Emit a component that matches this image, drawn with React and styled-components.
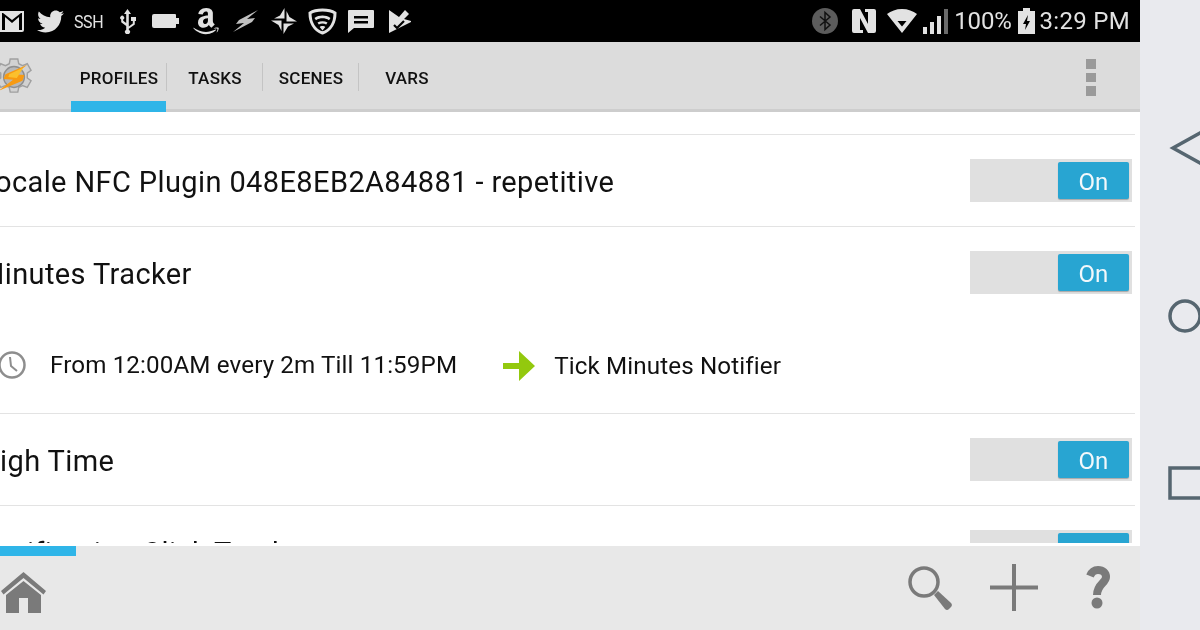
import React from "react";
import styled, { createGlobalStyle } from "styled-components";
import { FaTwitter, FaAmazon } from "react-icons/fa";

const GlobalStyle = createGlobalStyle`
  html, body {
    margin: 0;
    padding: 0;
    background: #e9eaee;
  }
  body {
    font-family: Roboto, "Liberation Sans", sans-serif;
    overflow: hidden;
  }
`;

const Screen = styled.div`
  width: 1200px;
  height: 630px;
  display: flex;
  overflow: hidden;
  filter: blur(0.35px);
`;

const Phone = styled.div`
  width: 1140px;
  height: 630px;
  display: flex;
  flex-direction: column;
  background: #fff;
  overflow: hidden;
`;

const StatusBar = styled.div`
  height: 42px;
  flex: none;
  background: #000;
  color: #e2e2e2;
  display: flex;
  align-items: center;
  justify-content: space-between;
  padding-right: 10px;
`;

const StatusGroup = styled.div`
  display: flex;
  align-items: center;
`;

const Glyph = styled.svg`
  flex: none;
  display: block;
  margin-left: ${p => p.$gap || 0}px;
  fill: #e2e2e2;
`;

const TwitterIcon = styled(FaTwitter)`
  flex: none;
  margin-left: 13px;
  color: #e2e2e2;
  font-size: 27px;
`;

const AmazonIcon = styled(FaAmazon)`
  flex: none;
  margin-left: 12px;
  color: #e2e2e2;
  font-size: 30px;
`;

const SshLabel = styled.span`
  margin-left: 10px;
  font-size: 16px;
  width: 30px;
  letter-spacing: -0.4px;
  transform: scaleY(1.1);
`;

const StatusText = styled.span`
  font-size: 24px;
  letter-spacing: ${p => p.$spacing || 0}px;
  margin-left: ${p => p.$gap || 0}px;
  white-space: nowrap;
`;

const ActionBar = styled.div`
  height: 70px;
  flex: none;
  box-sizing: border-box;
  background: #dcdcdc;
  border-bottom: 3px solid #cdcdcd;
  display: flex;
  position: relative;
`;

const AppLogo = styled.svg`
  flex: none;
  margin: 16px 0 0 -4px;
  width: 36px;
  height: 38px;
`;

const TabStrip = styled.div`
  display: flex;
  margin-left: 39px;
  height: 70px;
`;

const Tab = styled.div`
  width: 96px;
  height: 70px;
  box-sizing: border-box;
  display: flex;
  align-items: center;
  justify-content: center;
  padding-top: 2px;
  position: relative;
  font-size: 17px;
  font-weight: 500;
  color: #111;
  letter-spacing: 0.25px;

  &::after {
    content: "";
    position: absolute;
    right: 0;
    top: 21px;
    height: 28px;
    width: 1px;
    background: ${p => (p.$last ? "transparent" : "#c4c4c4")};
  }

  &::before {
    content: "";
    position: absolute;
    left: 0;
    right: 1px;
    bottom: 0;
    height: 11px;
    background: ${p => (p.$active ? "#2fb5e8" : "transparent")};
  }
`;

const Overflow = styled.div`
  margin-left: auto;
  margin-right: 44px;
  padding-top: 17px;
  display: flex;
  flex-direction: column;
  gap: 4px;
`;

const OverflowDot = styled.div`
  width: 10px;
  height: 9.5px;
  background: #9a9a9a;
`;

const List = styled.div`
  flex: 1;
  min-height: 0;
  margin-bottom: 3px;
  overflow: hidden;
  padding-top: 22px;
`;

const Row = styled.div`
  margin-right: 5px;
  border-top: 1px solid #e3e3e3;
`;

const RowHead = styled.div`
  height: 91px;
  display: flex;
  align-items: center;
  justify-content: space-between;
  padding-right: 3px;
`;

const RowTitle = styled.div`
  margin-left: -21px;
  padding-top: 2px;
  font-size: 29px;
  color: #111;
  letter-spacing: 0.39px;
  white-space: nowrap;
`;

const Toggle = styled.div`
  width: 162px;
  height: 43px;
  box-sizing: border-box;
  background: #e0e0e0;
  padding: 3px;
  display: flex;
  justify-content: flex-end;
`;

const ToggleKnob = styled.div`
  width: 71px;
  height: 37px;
  box-sizing: border-box;
  padding-top: 2px;
  background: #28a5d2;
  border-radius: 2px;
  box-shadow: 0 1px 1px rgba(0, 0, 0, 0.25);
  color: #f2f8fb;
  font-size: 24px;
  display: flex;
  align-items: center;
  justify-content: center;
`;

const RowDetail = styled.div`
  height: 95px;
  display: flex;
  align-items: flex-start;
  padding-top: 33px;
  box-sizing: border-box;
  font-size: 24.2px;
  color: #111;
`;

const ClockIcon = styled.svg`
  flex: none;
  margin-left: -2px;
  width: 28px;
  height: 28px;
`;

const DetailText = styled.span`
  margin-left: ${p => p.$gap}px;
  margin-top: ${p => p.$top || 0}px;
  white-space: nowrap;
  letter-spacing: 0.12px;
`;

const ArrowIcon = styled.svg`
  flex: none;
  margin-left: 46px;
  width: 32px;
  height: 30px;
`;

const Footer = styled.div`
  height: 84px;
  flex: none;
  background: #e8e8e8;
  position: relative;
  display: flex;
  align-items: flex-start;
`;

const ScrollMark = styled.div`
  position: absolute;
  left: 0;
  top: 0;
  width: 76px;
  height: 10px;
  background: #2fb5e8;
`;

const FooterIcon = styled.svg`
  flex: none;
  display: block;
  margin-left: ${p => p.$gap}px;
  margin-top: ${p => p.$top}px;
  fill: #7a7a7a;
`;

const NavBar = styled.div`
  width: 60px;
  height: 630px;
  flex: none;
  background: #e9eaee;
  padding-top: 130px;
  box-sizing: border-box;
  display: flex;
  flex-direction: column;
  gap: 132px;
  overflow: hidden;
`;

const NavIcon = styled.svg`
  display: block;
  flex: none;
  width: 60px;
  height: 36px;
  fill: none;
  stroke: #566670;
  stroke-width: 3.5;
`;

const rows = [
  { title: "Locale NFC Plugin 048E8EB2A84881 - repetitive" },
  { title: "Minutes Tracker", detail: true },
  { title: "High Time" },
  { title: "Notification Click Tracker" },
];

function OnToggle() {
  return (
    <Toggle>
      <ToggleKnob>On</ToggleKnob>
    </Toggle>
  );
}

function LeftStatus() {
  return (
    <StatusGroup>
      <Glyph width="24" height="21" viewBox="0 0 24 21">
        <path d="M2 0h22v19a2 2 0 0 1-2 2H0V0zM2 2v17h3V6l7 6 7-6v13h3V2h-1l-9 7-9-7z" />
      </Glyph>
      <TwitterIcon />
      <SshLabel>SSH</SshLabel>
      <Glyph $gap={14} width="19" height="25" viewBox="0 0 19 25">
        <path d="M9.500 0 13 5h-2.200v12.500l4-3V12H13V8h5v4h-1.200v3.500l-6 4.300v1a2.500 2.500 0 1 1-2.600 0v-3.800l-5-3.700V10.500a2 2 0 1 1 2 0v1.300l3 2.200V5H6z" />
      </Glyph>
      <Glyph $gap={15} width="27" height="14" viewBox="0 0 27 14">
        <path d="M2 0h21a1 1 0 0 1 1 1v3h3v6h-3v3a1 1 0 0 1-1 1H2a2 2 0 0 1-2-2V2a2 2 0 0 1 2-2z" />
      </Glyph>
      <AmazonIcon />
      <Glyph $gap={12} width="25" height="22" viewBox="0 0 25 22" style={{ opacity: 0.85 }}>
        <path d="M25 0 6 10l-3 4 8-1L0 22l19-10 3-4-8 1z" />
      </Glyph>
      <Glyph $gap={13} width="26" height="26" viewBox="0 0 26 26">
        {[0, 90, 180, 270].map(angle => (
          <path key={angle} d="M13.500 0v10.500H3l6-3z" transform={`rotate(${angle} 13 13)`} />
        ))}
      </Glyph>
      <Glyph $gap={11} width="29" height="27" viewBox="0 0 29 27">
        <path
          d="M14.500 2C9 2 5 3 2 5c0 9 4 17 12.500 20C23 22 27 14 27 5c-3-2-7-3-12.500-3z"
          fill="none"
          stroke="#e2e2e2"
          strokeWidth="3"
        />
        <path d="M6.500 10c5-3.200 11-3.200 16 0l-1.500 2.200c-4-2.500-9-2.500-13 0zM9.500 14.500c3-1.700 7-1.700 10 0l-1.300 2c-2.300-1.200-5.100-1.200-7.400 0zM14.500 18c1.200 0 2.200.4 2.800 1l-2.800 3.500-2.800-3.500c.6-.6 1.600-1 2.800-1z" />
      </Glyph>
      <Glyph $gap={11} width="26" height="23" viewBox="0 0 26 23">
        <path d="M1 0h24a1 1 0 0 1 1 1v16a1 1 0 0 1-1 1H6l-6 5V1a1 1 0 0 1 1-1zM6 6v2.500h14V6zM6 11v2.500h14V11z" fillRule="evenodd" />
      </Glyph>
      <Glyph $gap={15} width="22" height="23" viewBox="0 0 22 23">
        <path d="M0 0l10 7 6-7 4 4-5 5 7 2v1L0 23z" />
        <path d="M5 15l3 3 7-7" fill="none" stroke="#000" strokeWidth="2.200" />
      </Glyph>
    </StatusGroup>
  );
}

function RightStatus() {
  return (
    <StatusGroup>
      <Glyph width="26" height="26" viewBox="0 0 26 26">
        <circle cx="13" cy="13" r="13" fill="#5c5c5c" />
        <path d="M8 8.500 18 17l-5 4.500V4.500L18 9 8 17.500" fill="none" stroke="#111" strokeWidth="1.500" />
      </Glyph>
      <Glyph $gap={14} width="24" height="24" viewBox="0 0 24 24">
        <path d="M2 0h6l8 15V3h-3V0h9a2 2 0 0 1 2 2v20a2 2 0 0 1-2 2h-6L8 9v12h3v3H2a2 2 0 0 1-2-2V2a2 2 0 0 1 2-2z" />
      </Glyph>
      <Glyph $gap={11} width="30" height="24" viewBox="0 0 30 24">
        <path d="M15 0c6 0 11 2 15 5L15 24 0 5c4-3 9-5 15-5zM10.500 12l4.500 5.500 4.500-5.500z" fillRule="evenodd" />
      </Glyph>
      <Glyph $gap={6} width="25" height="25" viewBox="0 0 25 25">
        <path d="M0 18h4v7H0zM7 13h4v12H7zM14 7h4v18h-4z" />
        <path d="M21 0h4v25h-4z" fill="#6a6a6a" />
      </Glyph>
      <StatusText $gap={6} $spacing={-0.2}>100%</StatusText>
      <Glyph $gap={6} width="17" height="26" viewBox="0 0 17 26">
        <path d="M5 0h7v3h5v23H0V3h5zM10 7l-5 9h3l-1 6 5-9H9z" fillRule="evenodd" />
      </Glyph>
      <StatusText $gap={5} $spacing={0.3}>3:29 PM</StatusText>
    </StatusGroup>
  );
}

export default function App() {
  return (
    <>
      <GlobalStyle />
      <Screen>
        <Phone>
          <StatusBar>
            <LeftStatus />
            <RightStatus />
          </StatusBar>
          <ActionBar>
            <AppLogo viewBox="0 0 38 40">
              <path
                d="M15 1h8l1 5 4 2 5-2 4 7-4 3v5l4 3-4 7-5-2-4 2-1 5h-8l-1-5-4-2-5 2-4-7 4-3v-5l-4-3 4-7 5 2 4-2z"
                fill="#d2d2d2"
                stroke="#a0a0a0"
                strokeWidth="1.500"
              />
              <circle cx="19" cy="20" r="11" fill="#b8b8b8" stroke="#8f8f8f" strokeWidth="1.500" />
              <path d="M33 7 10 17l-2 5 10 1L2 35l26-11 2-6-10-1z" fill="#f79a12" />
              <path d="M29 10 14 17l-1 3 9 1" fill="#fbc02d" />
            </AppLogo>
            <TabStrip>
              <Tab $active>PROFILES</Tab>
              <Tab>TASKS</Tab>
              <Tab>SCENES</Tab>
              <Tab $last>VARS</Tab>
            </TabStrip>
            <Overflow>
              <OverflowDot />
              <OverflowDot />
              <OverflowDot />
            </Overflow>
          </ActionBar>
          <List>
            {rows.map(row => (
              <Row key={row.title}>
                <RowHead>
                  <RowTitle>{row.title}</RowTitle>
                  <OnToggle />
                </RowHead>
                {row.detail && (
                  <RowDetail>
                    <ClockIcon viewBox="0 0 28 28">
                      <circle cx="14" cy="14" r="12.500" fill="none" stroke="#8e8e8e" strokeWidth="2.500" />
                      <path d="M12 6l1 9 6 5" fill="none" stroke="#8e8e8e" strokeWidth="2" />
                    </ClockIcon>
                    <DetailText $gap={24}>From 12:00AM every 2m Till 11:59PM</DetailText>
                    <ArrowIcon viewBox="0 0 32 30">
                      <path d="M16 0 32 15 16 30V18H0v-6h16z" fill="#93c90e" />
                    </ArrowIcon>
                    <DetailText $gap={19} $top={1}>Tick Minutes Notifier</DetailText>
                  </RowDetail>
                )}
              </Row>
            ))}
          </List>
          <Footer>
            <ScrollMark />
            <FooterIcon $gap={1} $top={26} width="45" height="42" viewBox="0 0 45 42">
              <path d="M22.500 0 45 19l-2.500 3.500-20-16.500-20 16.500L0 19z" />
              <path d="M22.500 9 40 23v18H27V26h-9v15H5V23z" />
            </FooterIcon>
            <FooterIcon $gap={862} $top={20} width="44" height="44" viewBox="0 0 44 44">
              <circle cx="16" cy="16" r="14" fill="none" stroke="#7a7a7a" strokeWidth="3.500" />
              <path d="M26 29l4-4 13 12a3 3 0 0 1 0 4l-2 2a3 3 0 0 1-4 0z" />
            </FooterIcon>
            <FooterIcon $gap={38} $top={18} width="48" height="47" viewBox="0 0 48 47">
              <path d="M22 0h4v21.500h22v4H26V47h-4V25.500H0v-4h22z" />
            </FooterIcon>
            <FooterIcon $gap={47} $top={20} width="28" height="44" viewBox="0 0 28 44">
              <path d="M5 10C7 5 10 4 13 4c5 0 8 3 8 7 0 6-9 7-9 18" fill="none" stroke="#7a7a7a" strokeWidth="8" />
              <circle cx="12" cy="37" r="5.500" />
            </FooterIcon>
          </Footer>
        </Phone>
        <NavBar>
          <NavIcon viewBox="0 0 60 36">
            <path d="M62 2 33 18l29 16z" />
          </NavIcon>
          <NavIcon viewBox="0 0 60 36">
            <circle cx="45" cy="18" r="15" />
          </NavIcon>
          <NavIcon viewBox="0 0 60 36">
            <path d="M62 2H30v30h32z" />
          </NavIcon>
        </NavBar>
      </Screen>
    </>
  );
}
